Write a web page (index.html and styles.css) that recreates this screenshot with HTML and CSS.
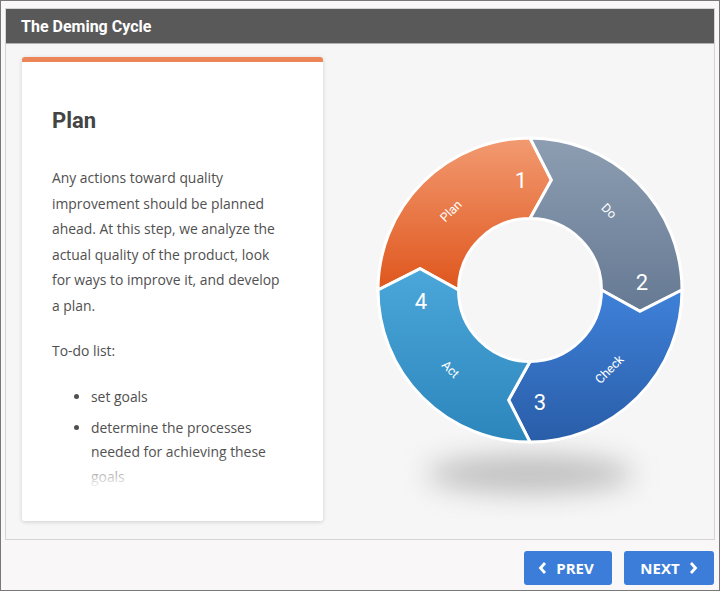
FILE: index.html
```html
<!DOCTYPE html>
<html>
<head>
<meta charset="utf-8">
<link rel="stylesheet" href="styles.css">
</head>
<body>
<div class="frame">
  <div class="panel">
    <div class="header">The Deming Cycle</div>
    <div class="content">
      <div class="card">
        <div class="card-body">
          <h2 class="card-title">Plan</h2>
          <p class="text">Any actions toward quality improvement should be planned ahead. At this step, we analyze the actual quality of the product, look for ways to improve it, and develop a plan.</p>
          <p class="text">To-do list:</p>
          <ul class="todo">
            <li>set goals</li>
            <li>determine the processes needed for achieving these goals</li>
          </ul>
        </div>
        <div class="fade"></div>
      </div>
      <div class="chart">
        <svg class="cycle" width="390" height="464" viewBox="323 58 390 464" xmlns="http://www.w3.org/2000/svg">
          <defs>
            <linearGradient id="gPlan" x1="0" y1="0" x2="0" y2="1">
              <stop offset="0" stop-color="#f29a71"/>
              <stop offset="1" stop-color="#df561d"/>
            </linearGradient>
            <linearGradient id="gDo" x1="0" y1="0" x2="0" y2="1">
              <stop offset="0" stop-color="#8d9eb2"/>
              <stop offset="1" stop-color="#667993"/>
            </linearGradient>
            <linearGradient id="gCheck" x1="0" y1="0" x2="0" y2="1">
              <stop offset="0" stop-color="#3f81d9"/>
              <stop offset="1" stop-color="#295da8"/>
            </linearGradient>
            <linearGradient id="gAct" x1="0" y1="0" x2="0" y2="1">
              <stop offset="0" stop-color="#4ba6d9"/>
              <stop offset="1" stop-color="#2c86bc"/>
            </linearGradient>
            <filter id="blur" x="-50%" y="-150%" width="200%" height="400%">
              <feGaussianBlur stdDeviation="14"/>
            </filter>
          </defs>
          <ellipse cx="530" cy="475" rx="104" ry="19" fill="#8a8a8a" opacity="0.5" filter="url(#blur)"/>
          <g stroke="#fff" stroke-width="3" stroke-linejoin="miter">
            <path fill="url(#gPlan)" d="M378,291 A152,152 0 0 1 530,139 L551.37,181.06 L530,219.5 A71.5,71.5 0 0 0 458.5,291 L420.06,269.63 Z"/>
            <path fill="url(#gDo)" d="M530,139 A152,152 0 0 1 682,291 L639.94,312.37 L601.5,291 A71.5,71.5 0 0 0 530,219.5 L551.37,181.06 Z"/>
            <path fill="url(#gCheck)" d="M682,291 A152,152 0 0 1 530,443 L508.63,400.94 L530,362.5 A71.5,71.5 0 0 0 601.5,291 L639.94,312.37 Z"/>
            <path fill="url(#gAct)" d="M530,443 A152,152 0 0 1 378,291 L420.06,269.63 L458.5,291 A71.5,71.5 0 0 0 530,362.5 L508.63,400.94 Z"/>
          </g>
          <g class="seg-label">
            <text x="450.8" y="211.8" transform="rotate(-45 450.8 211.8)">Plan</text>
            <text x="609.2" y="211.8" transform="rotate(45 609.2 211.8)">Do</text>
            <text x="609.2" y="370.2" transform="rotate(-45 609.2 370.2)">Check</text>
            <text x="450.8" y="370.2" transform="rotate(45 450.8 370.2)">Act</text>
          </g>
          <g class="seg-num">
            <text x="521" y="181">1</text>
            <text x="642" y="283">2</text>
            <text x="540" y="403">3</text>
            <text x="421" y="302">4</text>
          </g>
        </svg>
      </div>
    </div>
  </div>
  <div class="footer">
    <button class="nav-btn prev">
      <svg class="chev" width="9" height="14" viewBox="0 0 9 14"><path d="M7 2 L2.5 7 L7 12" fill="none" stroke="#fff" stroke-width="2.8"/></svg>
      <span>PREV</span>
    </button>
    <button class="nav-btn next">
      <span>NEXT</span>
      <svg class="chev" width="9" height="14" viewBox="0 0 9 14"><path d="M2 2 L6.5 7 L2 12" fill="none" stroke="#fff" stroke-width="2.8"/></svg>
    </button>
  </div>
</div>
</body>
</html>
```
FILE: styles.css
```css
* { box-sizing: border-box; }
html, body { margin: 0; padding: 0; }
body {
  width: 720px;
  height: 591px;
  overflow: hidden;
  font-family: "Open Sans", "Liberation Sans", sans-serif;
}
.frame {
  width: 720px;
  height: 591px;
  border: 1px solid #787878;
  background: #f9f7f7;
  display: flex;
  flex-direction: column;
}
.panel {
  margin: 7px 4px 0 4px;
  height: 532px;
  border: 1px solid #d4d4d4;
  display: flex;
  flex-direction: column;
  background: #f6f6f6;
}
.header {
  height: 35px;
  background: #595959;
  border-bottom: 1px solid #b2b2b2;
  color: #fff;
  font-family: Roboto, "Liberation Sans", sans-serif;
  font-weight: 700;
  font-size: 16px;
  line-height: 36px;
  padding-left: 15px;
}
.content {
  flex: 1;
  display: flex;
  padding: 13px 0 0 16px;
}
.card {
  position: relative;
  width: 301px;
  height: 464px;
  background: #fff;
  border-top: 5px solid #ec8659;
  border-radius: 3px;
  box-shadow: 0 1px 4px rgba(0,0,0,0.16);
  overflow: hidden;
}
.card-body {
  padding: 0 36px 0 30px;
  color: #505050;
  font-size: 13.9px;
}
.card-title {
  margin: 44px 0 0;
  font-family: Roboto, "Liberation Sans", sans-serif;
  font-weight: 700;
  font-size: 22px;
  line-height: 30px;
  color: #444;
}
.text {
  margin: 29px 0 0;
  line-height: 25.6px;
}
.text + .text { margin-top: 19px; }
.todo {
  margin: 22px 0 0;
  padding-left: 39px;
  line-height: 24.6px;
}
.todo li + li { margin-top: 6px; }
.fade {
  position: absolute;
  left: 0;
  right: 0;
  top: 392px;
  bottom: 0;
  background: linear-gradient(rgba(255,255,255,0) 0, #fff 52%);
}
.chart {
  flex: 1;
  display: flex;
}
.cycle { display: block; }
.seg-label text {
  fill: #fff;
  font-family: Roboto, "Liberation Sans", sans-serif;
  font-size: 12.5px;
  text-anchor: middle;
  dominant-baseline: central;
}
.seg-num text {
  fill: #fff;
  font-family: Roboto, "Liberation Sans", sans-serif;
  font-size: 22px;
  text-anchor: middle;
  dominant-baseline: central;
}
.footer {
  display: flex;
  justify-content: flex-end;
  gap: 12px;
  padding: 11px 5px 0 0;
}
.nav-btn {
  height: 34px;
  border: none;
  border-radius: 3px;
  background: #3b7dd8;
  color: #fff;
  font-family: "Open Sans", "Liberation Sans", sans-serif;
  font-weight: 700;
  font-size: 15px;
  display: flex;
  align-items: center;
  justify-content: center;
  gap: 9px;
  padding: 0;
}
.nav-btn.prev { width: 88px; padding-right: 4px; }
.nav-btn.next { width: 90px; }
.chev { display: block; }
```
